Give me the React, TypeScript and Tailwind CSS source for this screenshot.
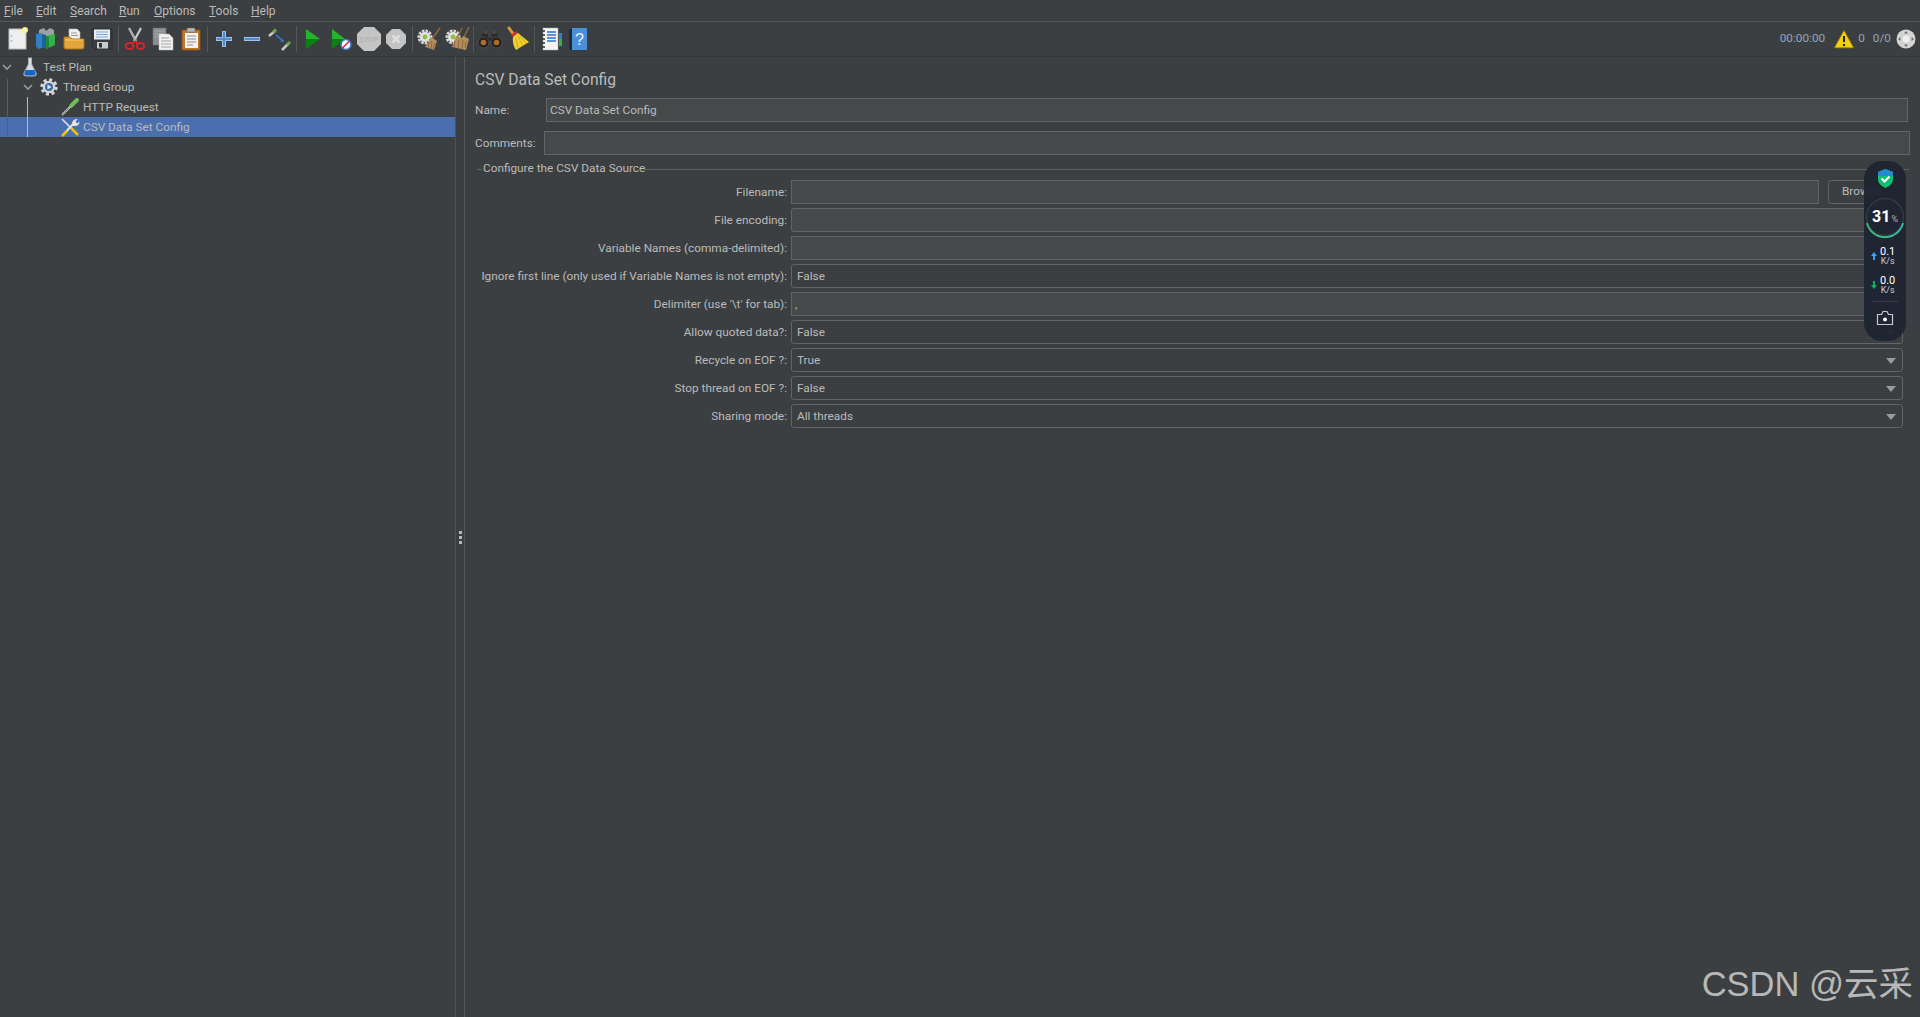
import React from 'react';

const FONT = "font-['Roboto','Noto_Sans',sans-serif]";

const Sep = () => <div className="w-px h-[26px] bg-[#55585a] mx-[2px] shrink-0" />;

const Tool: React.FC<{ children: React.ReactNode }> = ({ children }) => (
  <div className="w-[28px] h-[28px] flex items-center justify-center shrink-0">
    <svg width="26" height="26" viewBox="0 0 26 26">{children}</svg>
  </div>
);

const NewIcon = () => (
  <Tool>
    <rect x="4" y="3" width="17" height="20" fill="#eeeeee" stroke="#bdbdbd" />
    <circle cx="6.500" cy="10" r=".8" fill="#999" />
    <circle cx="6.500" cy="15" r=".8" fill="#999" />
    <circle cx="20" cy="4" r="3" fill="#fff27a" />
    <circle cx="20" cy="4" r="1.500" fill="#fffde0" />
  </Tool>
);
const TemplatesIcon = () => (
  <Tool>
    <path d="M6 4l5-2 2 3 4-3 4 2v8H6z" fill="#9aa3a6" />
    <path d="M3 8l6-1v15l-4 1-2-3z" fill="#2f80c8" />
    <path d="M9 8l4 1v13H9z" fill="#1f5f9a" />
    <path d="M13 10l9-2v11l-9 4z" fill="#35b04a" />
    <path d="M13 10l3 1v11l-3 1z" fill="#1c8a33" />
  </Tool>
);
const OpenIcon = () => (
  <Tool>
    <path d="M8 3h8l3 3v9H8z" fill="#f0f0f0" stroke="#b5b5b5" strokeWidth=".6" />
    <path d="M10 7h6M10 9.500h7" stroke="#999" />
    <path d="M3 11h6l2 2h12v8q0 2-2 2H5q-2 0-2-2z" fill="#e3a63a" stroke="#a87416" />
    <path d="M4 14h18" stroke="#f3c971" />
  </Tool>
);
const SaveIcon = () => (
  <Tool>
    <path d="M3 3h20v20H6l-3-3z" fill="#3a3d40" stroke="#222" strokeWidth=".6" />
    <rect x="5" y="3.500" width="16" height="10" fill="#e8eef5" />
    <path d="M7 6h12M7 8.500h12M7 11h12" stroke="#7fa8d4" />
    <rect x="8" y="16" width="11" height="6.500" fill="#c9c9c9" />
    <rect x="10" y="17" width="3" height="4.500" fill="#333" />
  </Tool>
);
const CutIcon = () => (
  <Tool>
    <path d="M7 2l7 13M19 2l-7 13" stroke="#c9c9c9" strokeWidth="2.200" />
    <path d="M7 2l7 13" stroke="#8f8f8f" strokeWidth=".7" />
    <ellipse cx="7.500" cy="20" rx="3.800" ry="3" fill="none" stroke="#d8232a" strokeWidth="2" />
    <ellipse cx="18.500" cy="20" rx="3.800" ry="3" fill="none" stroke="#d8232a" strokeWidth="2" />
    <path d="M13 15l-3 3M13 15l3 3" stroke="#d8232a" strokeWidth="2" />
  </Tool>
);
const CopyIcon = () => (
  <Tool>
    <path d="M3 2h13v17H3z" fill="#8e8e8e" stroke="#777" strokeWidth=".5" />
    <path d="M5 5h9M5 8h9M5 11h9" stroke="#a8a8a8" />
    <path d="M9 8h10l4 4v12H9z" fill="#f2f2f2" stroke="#bbb" strokeWidth=".5" />
    <path d="M11 12h8M11 15h10M11 18h10M11 21h10" stroke="#a0a0a0" />
  </Tool>
);
const PasteIcon = () => (
  <Tool>
    <rect x="4" y="4" width="18" height="20" rx="1" fill="#bd7a2e" stroke="#8a5417" />
    <rect x="7" y="7" width="13" height="15" fill="#f3f3f3" />
    <rect x="9" y="2" width="8" height="4" rx="1" fill="#b9b9b9" stroke="#666" strokeWidth=".5" />
    <path d="M9 10h9M9 13h9M9 16h9M9 19h6" stroke="#8d8d8d" />
  </Tool>
);
const PlusIcon = () => (
  <Tool>
    <path d="M13 5v16M5 13h16" stroke="#b5d2f0" strokeWidth="4" />
    <path d="M13 5.500v15M5.500 13h15" stroke="#4a8ed6" strokeWidth="2.400" />
  </Tool>
);
const MinusIcon = () => (
  <Tool>
    <path d="M5 13h16" stroke="#b5d2f0" strokeWidth="4" />
    <path d="M5.500 13h15" stroke="#4a8ed6" strokeWidth="2.400" />
  </Tool>
);
const ToggleIcon = () => (
  <Tool>
    <path d="M2 10l6-5" stroke="#c8c8c8" strokeWidth="2.500" />
    <path d="M6 6.500l3-3" stroke="#6aa84f" strokeWidth="3" />
    <path d="M15 24l6-6" stroke="#c8c8c8" strokeWidth="2.500" />
    <path d="M20 19l3-3" stroke="#6aa84f" strokeWidth="3" />
    <path d="M9 9l7 6" stroke="#2f7fd6" strokeWidth="1.500" />
    <path d="M17 16l-4-.5 2.500-2.500z" fill="#2f7fd6" />
  </Tool>
);
const StartIcon = () => (
  <Tool>
    <path d="M6 3l14 10H6z" fill="#25b52c" />
    <path d="M6 23l14-10H6z" fill="#0c8013" />
  </Tool>
);
const StartNoPauseIcon = () => (
  <Tool>
    <path d="M4 3l13 10H4z" fill="#25b52c" />
    <path d="M4 23l13-10H4z" fill="#0c8013" />
    <circle cx="18" cy="18.500" r="5" fill="#f4f8ff" stroke="#3a77c9" strokeWidth="1.500" />
    <path d="M14.500 22l7-7" stroke="#d8232a" strokeWidth="1.400" />
  </Tool>
);
const StopIcon = () => (
  <div className="w-[27px] h-[28px] flex items-center justify-center shrink-0">
    <svg width="26" height="26" viewBox="0 0 26 26">
      <path d="M8 1h10l7 7v10l-7 7H8l-7-7V8z" fill="#c4c4c4" />
      <text x="13" y="16" textAnchor="middle" fontSize="7" fontWeight="700" fill="#b4b4b4" fontFamily="Liberation Sans">STOP</text>
    </svg>
  </div>
);
const ShutdownIcon = () => (
  <Tool>
    <path d="M9 3h8l6 6v8l-6 6H9l-6-6V9z" fill="#c4c4c4" />
    <path d="M9.500 9.500l7 7M16.500 9.500l-7 7" stroke="#dedede" strokeWidth="2.600" />
  </Tool>
);
const Gear = () => (
  <>
    <circle cx="9" cy="11" r="6" fill="none" stroke="#d6d6d6" strokeWidth="3" strokeDasharray="2.500 1" />
    <circle cx="9" cy="11" r="5" fill="#e2e2e2" />
    <circle cx="9" cy="11" r="2.400" fill="#86c440" />
  </>
);
const ClearIcon = () => (
  <Tool>
    <Gear />
    <path d="M24 2l-8 11" stroke="#8a6a3f" strokeWidth="1.500" />
    <path d="M15 11l6 4-3 9-9-3z" fill="#b58d5c" />
    <path d="M13 16l-1 6M16 15l-1 8M19 17l-2 6" stroke="#7e5f36" strokeWidth=".8" />
  </Tool>
);
const ClearAllIcon = () => (
  <Tool>
    <Gear />
    <path d="M25 1l-5 10M18 2l-5 10" stroke="#8a6a3f" strokeWidth="1.500" />
    <path d="M12 10l6 2 1-2 6 3-3 11-14-3z" fill="#b58d5c" />
    <path d="M11 15l-1 7M15 14l-1 8M19 14l-1 9M22 15l-1 7" stroke="#7e5f36" strokeWidth=".8" />
  </Tool>
);
const SearchIcon = () => (
  <Tool>
    <path d="M6 7h5v5h4V7h5l4 8H2z" fill="#2b2b2b" />
    <path d="M7.500 5h3v3h-3zM15.500 5h3v3h-3z" fill="#4a4a4a" />
    <circle cx="6.500" cy="16.500" r="5.500" fill="#222" stroke="#666" strokeWidth=".6" />
    <circle cx="19.500" cy="16.500" r="5.500" fill="#222" stroke="#666" strokeWidth=".6" />
    <circle cx="6.500" cy="16.500" r="2.800" fill="#b06a2a" />
    <circle cx="19.500" cy="16.500" r="2.800" fill="#b06a2a" />
  </Tool>
);
const BroomIcon = () => (
  <Tool>
    <path d="M4 2l5 7" stroke="#d9973a" strokeWidth="3" strokeLinecap="round" />
    <path d="M6 9l5-4 2 2-5 4z" fill="#d22f2f" />
    <path d="M8 11l5-4 11 9-13 8q-4-6-3-13z" fill="#f0cf2e" />
    <path d="M11 12l2 10M13 10l5 10M15 10l6 7" stroke="#c9a41c" strokeWidth=".8" />
  </Tool>
);
const LogIcon = () => (
  <Tool>
    <rect x="5" y="2" width="15" height="22" fill="#f5f5f5" stroke="#aaa" strokeWidth=".5" />
    <path d="M3 5h4M3 9h4M3 13h4M3 17h4M3 21h4" stroke="#333" strokeWidth="1.400" />
    <path d="M9 6h9M9 9h9M9 12h9M9 15h9" stroke="#2f6fc9" strokeWidth="1.300" />
    <rect x="21" y="7" width="3" height="6" fill="#2f80c8" />
    <rect x="21" y="13" width="3" height="7" fill="#35b04a" />
  </Tool>
);
const HelpIcon = () => (
  <Tool>
    <path d="M3 3h4v21H5q-2 0-2-2z" fill="#1d2a3a" />
    <rect x="6" y="2" width="15" height="22" fill="#4a90d9" />
    <text x="13.500" y="19" textAnchor="middle" fontSize="16" fill="#eaf3ff" fontFamily="Liberation Sans">?</text>
  </Tool>
);

const FlaskIcon = () => (
  <svg width="18" height="20" viewBox="0 0 18 20" className="shrink-0 ml-[8px]">
    <path d="M7 1h4M7.500 1v6L3 16q-1 3 2 3h8q3 0 2-3l-4.500-9V1" fill="#d8dde3" stroke="#aab1b8" />
    <path d="M4.500 13h9l1 3q.5 2.500-2 2.500h-7q-2.500 0-2-2.500z" fill="#1565c8" />
  </svg>
);
const GearTreeIcon = () => (
  <svg width="20" height="20" viewBox="0 0 20 20" className="shrink-0 ml-[5px]">
    <circle cx="10" cy="10" r="7.200" fill="none" stroke="#d5d5d5" strokeWidth="3" strokeDasharray="3 2.650" />
    <circle cx="10" cy="10" r="6.300" fill="#d5d5d5" />
    <circle cx="10" cy="10" r="4" fill="#3a6ea8" />
    <path d="M8.500 7.500l4 2.500-4 2.500z" fill="#dfe9f5" />
  </svg>
);
const DropperIcon = () => (
  <svg width="20" height="20" viewBox="0 0 20 20" className="shrink-0">
    <path d="M2 18l9-9" stroke="#cfcfcf" strokeWidth="2" />
    <path d="M2 18l7-7" stroke="#555" strokeWidth=".7" />
    <path d="M9 7l4 4" stroke="#333" strokeWidth="2.500" />
    <path d="M11 9l6-6" stroke="#6fbf5a" strokeWidth="4" strokeLinecap="round" />
  </svg>
);
const ToolsIcon = () => (
  <svg width="20" height="20" viewBox="0 0 20 20" className="shrink-0">
    <path d="M2 2l15 15" stroke="#e5e5e5" strokeWidth="1.500" />
    <path d="M11 11l7 7" stroke="#f2c200" strokeWidth="2.500" />
    <path d="M3 18L14 6" stroke="#e5e5e5" strokeWidth="2" />
    <path d="M2 19l5-5" stroke="#f2c200" strokeWidth="2.500" />
    <path d="M12 7q0-5 6-5l-2.500 2.500 1.500 2 2.500-2q0 5-6 4.500z" fill="#e5e5e5" />
  </svg>
);

const Chevron = () => (
  <svg width="12" height="12" viewBox="0 0 12 12" className="shrink-0">
    <path d="M2 4l4 4 4-4" fill="none" stroke="#9a9a9a" strokeWidth="1.600" />
  </svg>
);

const TreeRow: React.FC<{ indent: string; labelGap: string; selected?: boolean; chevron?: boolean; icon: React.ReactNode; label: string }> = ({
  indent, labelGap, selected, chevron, icon, label,
}) => (
  <div className={`h-[20px] flex items-center ${indent} ${selected ? 'bg-[#4b6eaf]' : ''}`}>
    {chevron && <Chevron />}
    {icon}
    <span className={`${labelGap} pt-[1px] text-[11.800px] text-[#bbbbbb] whitespace-nowrap`}>{label}</span>
  </div>
);

const Tree = () => (
  <div className="relative w-[455px] shrink-0">
    <div className="absolute left-[7px] top-[22px] w-px h-[58px] bg-[#5c5f61]" />
    <div className="absolute left-[27px] top-[40px] w-px h-[40px] bg-[#8fc3f0]" />
    <TreeRow indent="pl-[1px]" labelGap="ml-[4px]" chevron icon={<FlaskIcon />} label="Test Plan" />
    <TreeRow indent="pl-[22px]" labelGap="ml-[4px]" chevron icon={<GearTreeIcon />} label="Thread Group" />
    <TreeRow indent="pl-[60px]" labelGap="ml-[3px]" icon={<DropperIcon />} label="HTTP Request" />
    <TreeRow indent="pl-[60px]" labelGap="ml-[3px]" selected icon={<ToolsIcon />} label="CSV Data Set Config" />
  </div>
);

const Input: React.FC<{ value?: string; rounded?: boolean; className?: string }> = ({ value, rounded, className }) => (
  <div className={`h-[24px] border border-[#646464] bg-[#45494a] flex items-center px-[3px] pt-[1px] text-[11.800px] text-[#bbbbbb] ${rounded ? 'rounded-[3px]' : ''} ${className ?? ''}`}>
    {value}
  </div>
);

const Combo: React.FC<{ value: string }> = ({ value }) => (
  <div className="flex-1 h-[24px] border border-[#646464] rounded-[3px] bg-[#3c3f41] flex items-center justify-between pl-[5px] pr-[6px] pt-[1px] text-[11.800px] text-[#bbbbbb]">
    <span>{value}</span>
    <svg width="10" height="6" viewBox="0 0 10 6"><path d="M0 0h10L5 6z" fill="#9a9a9a" /></svg>
  </div>
);

const Row: React.FC<{ label: string; children: React.ReactNode }> = ({ label, children }) => (
  <div className="flex items-center gap-[4px] pr-[17px]">
    <div className="w-[322px] shrink-0 pt-[1px] text-right text-[11.800px] text-[#bbbbbb] whitespace-nowrap">{label}</div>
    {children}
  </div>
);

const Form = () => (
  <div className="flex-1 min-w-0 pt-[13px]">
    <div className="pl-[10px] h-[20px] leading-[20px] text-[15.600px] text-[#bbbbbb]">CSV Data Set Config</div>
    <div className="mt-[8px] flex items-center pl-[10px] pr-[12px]">
      <div className="w-[71px] shrink-0 pt-[1px] text-[11.800px] text-[#bbbbbb]">Name:</div>
      <Input value="CSV Data Set Config" className="flex-1" />
    </div>
    <div className="mt-[9px] flex items-center pl-[10px] pr-[10px]">
      <div className="w-[69px] shrink-0 pt-[1px] text-[11.800px] text-[#bbbbbb]">Comments:</div>
      <Input className="flex-1" />
    </div>
    <div className="mt-[7px] h-[14px] flex items-center pl-[12px] pr-[11px]">
      <div className="w-[5px] h-px bg-[#5e6163] mr-[1px]" />
      <span className="text-[11.800px] text-[#bbbbbb] whitespace-nowrap">Configure the CSV Data Source</span>
      <div className="flex-1 h-px bg-[#5e6163]" />
    </div>
    <div className="mt-[4px] flex flex-col gap-[4px]">
      <Row label="Filename:">
        <Input className="flex-1" />
        <div className="ml-[5px] w-[75px] h-[24px] border border-[#646464] rounded-[3px] flex items-center pl-[13px] text-[11.800px] text-[#bbbbbb]">Browse...</div>
      </Row>
      <Row label="File encoding:"><Input rounded className="flex-1" /></Row>
      <Row label="Variable Names (comma-delimited):"><Input className="flex-1" /></Row>
      <Row label="Ignore first line (only used if Variable Names is not empty):"><Combo value="False" /></Row>
      <Row label="Delimiter (use '\t' for tab):"><Input value="," className="flex-1" /></Row>
      <Row label="Allow quoted data?:"><Combo value="False" /></Row>
      <Row label="Recycle on EOF ?:"><Combo value="True" /></Row>
      <Row label="Stop thread on EOF ?:"><Combo value="False" /></Row>
      <Row label="Sharing mode:"><Combo value="All threads" /></Row>
    </div>
  </div>
);

const Splitter = () => (
  <div className="w-[10px] shrink-0 border-l border-l-[#4f5254] border-r border-r-[#55585a] flex flex-col items-center justify-center gap-[2px]">
    <div className="w-[3px] h-[3px] bg-[#b8b8b8]" />
    <div className="w-[3px] h-[3px] bg-[#b8b8b8]" />
    <div className="w-[3px] h-[3px] bg-[#b8b8b8]" />
  </div>
);

// the network meter floating over the window
const Meter = () => (
  <div className="absolute left-[1864px] top-[161px] w-[42px] h-[180px] rounded-[18px] bg-[#1f2431]/95 flex flex-col items-center pt-[8px] text-white">
    <svg width="17" height="19" viewBox="0 0 17 19" className="shrink-0">
      <path d="M8.500 0L16 3v7q0 6-7.500 9Q1 16 1 10V3z" fill="#0fc06f" />
      <path d="M8.500 0L16 3v4H1V3z" fill="#2a7fe0" opacity=".85" />
      <path d="M4.500 9.500l3 3 5-5" fill="none" stroke="#fff" strokeWidth="2" />
    </svg>
    <div className="relative mt-[8px] w-[42px] h-[42px] flex items-center justify-center">
      <svg width="42" height="42" viewBox="0 0 42 42" className="absolute inset-0">
        <defs>
          <linearGradient id="arc" x1="0" x2="1" y1="0" y2="0">
            <stop offset="0" stopColor="#3fbf6f" />
            <stop offset="1" stopColor="#33c3a8" />
          </linearGradient>
        </defs>
        <circle cx="21" cy="21" r="18.500" fill="none" stroke="#343946" strokeWidth="1.500" />
        <path d="M3 27A18.500 18.500 0 0 0 39 27" fill="none" stroke="url(#arc)" strokeWidth="1.800" />
      </svg>
      <span className="text-[16px] font-bold leading-none">31</span>
      <span className="text-[9px] text-[#aab0bb] mt-[5px] ml-[1px]">%</span>
    </div>
    <div className="mt-[8px] flex items-center gap-[3px] w-full pl-[7px]">
      <svg width="6" height="8" viewBox="0 0 6 8" className="shrink-0"><path d="M3 0l3 4H4v4H2V4H0z" fill="#2ea8ff" /></svg>
      <div className="flex flex-col items-center leading-none">
        <span className="text-[11px]">0.1</span>
        <span className="text-[9px] text-[#c8ccd4]">K/s</span>
      </div>
    </div>
    <div className="mt-[9px] flex items-center gap-[3px] w-full pl-[7px]">
      <svg width="6" height="8" viewBox="0 0 6 8" className="shrink-0"><path d="M3 8L0 4h2V0h2v4h2z" fill="#10b060" /></svg>
      <div className="flex flex-col items-center leading-none">
        <span className="text-[11px]">0.0</span>
        <span className="text-[9px] text-[#c8ccd4]">K/s</span>
      </div>
    </div>
    <div className="mt-[6px] w-[26px] h-px bg-[#353b47]" />
    <svg width="18" height="16" viewBox="0 0 18 16" className="mt-[8px] shrink-0">
      <path d="M1.500 4.500h4l1.500-3h4l1.500 3h4v10h-15z" fill="none" stroke="#c5c9d0" strokeWidth="1.200" />
      <circle cx="9" cy="9.500" r="2" fill="#ffffff" />
    </svg>
  </div>
);

const MenuItem: React.FC<{ first: string; rest: string; width: string }> = ({ first, rest, width }) => (
  <span className={`${width} shrink-0`}><u>{first}</u>{rest}</span>
);

const App: React.FC = () => {
  return (
    <div className={`relative w-screen h-screen overflow-hidden bg-[#3c3f41] flex flex-col ${FONT}`}>
      {/* Menu */}
      <div className="h-[22px] shrink-0 border-b border-[#55585a] flex items-center pl-[4px] text-[12px] text-[#bbbbbb]">
        <MenuItem first="F" rest="ile" width="w-[32px]" />
        <MenuItem first="E" rest="dit" width="w-[34px]" />
        <MenuItem first="S" rest="earch" width="w-[49px]" />
        <MenuItem first="R" rest="un" width="w-[35px]" />
        <MenuItem first="O" rest="ptions" width="w-[55px]" />
        <MenuItem first="T" rest="ools" width="w-[42px]" />
        <MenuItem first="H" rest="elp" width="w-[40px]" />
      </div>

      {/* Toolbar */}
      <div className="h-[35px] shrink-0 border-b border-[#323537] flex items-center pl-[4px]">
        <NewIcon /><TemplatesIcon /><OpenIcon /><SaveIcon />
        <Sep />
        <CutIcon /><CopyIcon /><PasteIcon />
        <Sep />
        <PlusIcon /><MinusIcon /><ToggleIcon />
        <Sep />
        <StartIcon /><StartNoPauseIcon /><StopIcon /><ShutdownIcon />
        <Sep />
        <ClearIcon /><ClearAllIcon />
        <Sep />
        <SearchIcon /><BroomIcon />
        <Sep />
        <LogIcon /><HelpIcon />
        <div className="ml-auto flex items-center pr-[4px] text-[11.800px] text-[#8fa6bf]">
          <span>00:00:00</span>
          <svg width="22" height="20" viewBox="0 0 22 20" className="ml-[8px]">
            <path d="M11 1l10 18H1z" fill="#f2cf0f" stroke="#6e5f10" />
            <path d="M11 7v6" stroke="#222" strokeWidth="2" />
            <circle cx="11" cy="16" r="1.200" fill="#222" />
          </svg>
          <span className="ml-[3px]">0</span>
          <span className="ml-[8px]">0/0</span>
          <svg width="20" height="20" viewBox="0 0 20 20" className="ml-[5px]">
            <circle cx="10" cy="10" r="9.500" fill="#d4d4d4" />
            <circle cx="10" cy="10" r="3.500" fill="#efefef" />
            <path d="M10 2l2 2.500H8zM10 18l2-2.500H8zM2 10l2.500-2v4zM18 10l-2.500-2v4z" fill="#6f6f6f" />
          </svg>
        </div>
      </div>

      {/* Main */}
      <div className="flex-1 flex min-h-0">
        <Tree />
        <Splitter />
        <Form />
      </div>

      <Meter />

      <div className="absolute right-[7px] top-[960px] text-[34.500px] leading-[48px] text-[#b8b8b8] whitespace-nowrap font-['Liberation_Sans','Noto_Sans_CJK_SC',sans-serif]">
        CSDN @云采
      </div>
    </div>
  );
};

export default App;
